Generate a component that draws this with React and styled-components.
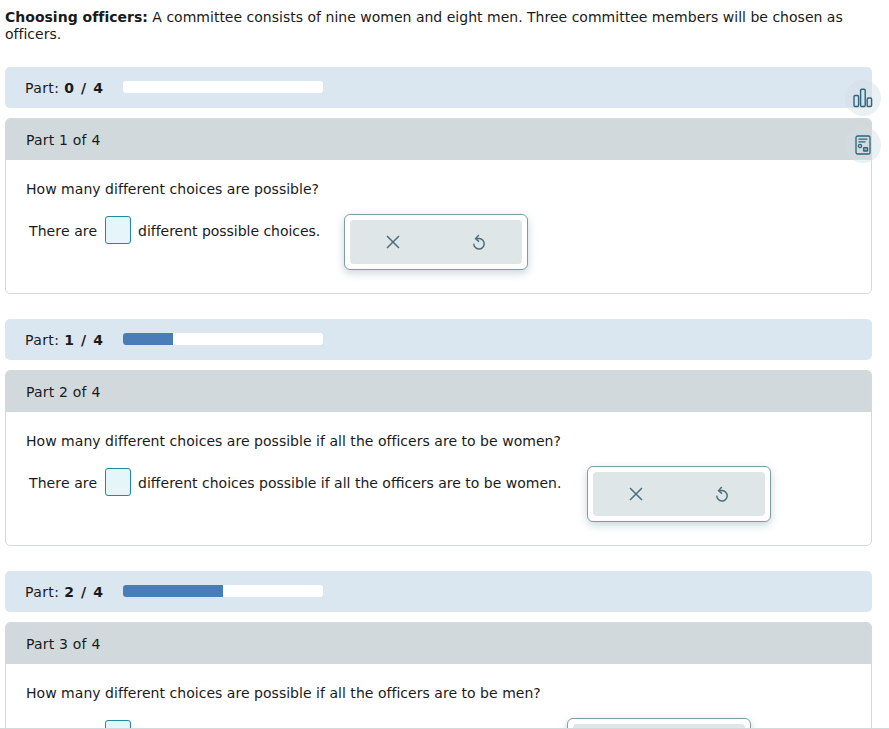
import React from "react";
import styled, { createGlobalStyle } from "styled-components";

const Global = createGlobalStyle`
  html, body { margin: 0; padding: 0; background: #fff; overflow: hidden; }
  body { font-family: "DejaVu Sans", Verdana, sans-serif; font-size: 14px; color: #1a1a1a; }
`;

const Viewport = styled.div`
  position: relative;
  width: 889px;
  height: 729px;
  overflow: hidden;
  box-sizing: border-box;
  border-bottom: 1px solid #d3dadc;
`;

const Page = styled.div`
  width: 867px;
  margin-left: 5px;
`;

const Intro = styled.p`
  margin: 9px 0 24px;
  width: 850px;
  font-size: 14px;
  line-height: 17px;
  letter-spacing: 0.01px;
`;

const Section = styled.section`
  margin-bottom: 25px;
`;

const ProgressBar = styled.div`
  display: flex;
  align-items: center;
  height: 41px;
  padding-left: 20px;
  background: #dae6f0;
  border-radius: 5px;
  margin-bottom: 10px;
`;

const ProgressLabel = styled.div`
  width: 98px;
  white-space: nowrap;
  letter-spacing: 0.4px;
  b { font-weight: 700; letter-spacing: 0.6px; word-spacing: 1px; }
`;

const Track = styled.div`
  width: 200px;
  height: 12px;
  margin-bottom: 1px;
  background: #fff;
  border-radius: 3px;
  overflow: hidden;
`;

const Fill = styled.div`
  height: 100%;
  background: #4a7db8;
`;

const Card = styled.div`
  border: 1px solid #d3dadc;
  border-radius: 5px;
  height: 176px;
  box-sizing: border-box;
  overflow: hidden;
`;

const CardHeader = styled.div`
  display: flex;
  align-items: center;
  height: 41px;
  padding-left: 20px;
  background: #d2d9dc;
  letter-spacing: 0.2px;
`;

const CardBody = styled.div`
  padding: 21px 0 0 20px;
`;

const Question = styled.div`
  line-height: 17px;
  margin-bottom: 16px;
  letter-spacing: 0.03px;
`;

const AnswerRow = styled.div`
  display: flex;
  align-items: flex-start;
  margin-left: 3px;
`;

const AnswerText = styled.span`
  line-height: 17px;
  margin-top: 9px;
  white-space: nowrap;
  letter-spacing: ${(p) => p.$tracking || 0}px;
`;

const AnswerBox = styled.span`
  flex: none;
  width: 26px;
  height: 28px;
  box-sizing: border-box;
  margin: 2px 7px 0 8px;
  background: #e6f5f9;
  border: 1px solid #1f8a9e;
  border-radius: 3px;
`;

const Popup = styled.div`
  flex: none;
  width: 184px;
  height: 56px;
  box-sizing: border-box;
  margin-left: ${(p) => p.$gap}px;
  padding: 5px;
  background: #fff;
  border: 1px solid #7f9ca6;
  border-radius: 6px;
  box-shadow: 0 3px 8px rgba(70, 100, 110, 0.28);
`;

const PopupInner = styled.div`
  display: flex;
  align-items: center;
  height: 44px;
  background: #dfe6e8;
  border-radius: 4px;
`;

const PopupButton = styled.span`
  display: flex;
  justify-content: center;
  align-items: center;
  width: 86px;
  color: #4a6f7d;
`;

const FloatButton = styled.div`
  position: absolute;
  left: 845px;
  top: ${(p) => p.$top}px;
  width: 36px;
  height: 36px;
  border-radius: 50%;
  display: flex;
  align-items: center;
  justify-content: center;
  background: rgba(210, 222, 226, 0.45);
  color: #2f6478;
`;

const XIcon = () => (
  <svg width="14" height="14" viewBox="0 0 14 14" fill="none" stroke="currentColor" strokeWidth="1.5">
    <path d="M1 1 13 13M13 1 1 13" />
  </svg>
);

const UndoIcon = () => (
  <svg width="14" height="16" viewBox="0 0 14 16" fill="none" stroke="currentColor" strokeWidth="1.5">
    <path d="M4.2 4.6h3a5.2 5.2 0 1 1-5.4 5" />
    <path d="M6.8 1 3.6 4.6l3.4 3" />
  </svg>
);

const ChartIcon = () => (
  <svg width="20" height="20" viewBox="0 0 20 20" fill="none" stroke="currentColor" strokeWidth="1.4">
    <rect x="1" y="7.5" width="4.6" height="11" rx="1.2" />
    <rect x="7.6" y="1.2" width="4.6" height="17.3" rx="1.2" />
    <rect x="14.2" y="10" width="4.4" height="8.5" rx="1.2" />
  </svg>
);

const ReportIcon = () => (
  <svg width="16" height="20" viewBox="0 0 16 20" fill="none" stroke="currentColor" strokeWidth="1.3">
    <rect x="1" y="1" width="14" height="18" rx="1.6" />
    <path d="M3.5 4.2h9M3.5 6.8h7" />
    <circle cx="5" cy="11" r="1.6" />
    <rect x="8.6" y="12.6" width="4" height="3.4" rx="0.6" fill="currentColor" fillOpacity="0.4" />
  </svg>
);

const parts = [
  { done: 0, q: "How many different choices are possible?", a: "different possible choices.", tracking: -0.03, gap: 24 },
  { done: 1, q: "How many different choices are possible if all the officers are to be women?", a: "different choices possible if all the officers are to be women.", tracking: 0, gap: 26 },
  { done: 2, q: "How many different choices are possible if all the officers are to be men?", a: "different choices possible if all the officers are to be men.", tracking: 0, gap: 26 },
];

export default function App() {
  return (
    <Viewport>
      <Global />
      <Page>
        <Intro>
          <b>Choosing officers:</b> A committee consists of nine women and eight men. Three committee members will be chosen as officers.
        </Intro>
        {parts.map((part) => (
          <Section key={part.done}>
            <ProgressBar>
              <ProgressLabel>
                Part: <b>{part.done} / 4</b>
              </ProgressLabel>
              <Track>
                <Fill style={{ width: `${part.done * 25}%` }} />
              </Track>
            </ProgressBar>
            <Card>
              <CardHeader>Part {part.done + 1} of 4</CardHeader>
              <CardBody>
                <Question>{part.q}</Question>
                <AnswerRow>
                  <AnswerText $tracking={0.1}>There are</AnswerText>
                  <AnswerBox />
                  <AnswerText $tracking={part.tracking}>{part.a}</AnswerText>
                  <Popup $gap={part.gap}>
                    <PopupInner>
                      <PopupButton><XIcon /></PopupButton>
                      <PopupButton><UndoIcon /></PopupButton>
                    </PopupInner>
                  </Popup>
                </AnswerRow>
              </CardBody>
            </Card>
          </Section>
        ))}
      </Page>
      <FloatButton $top={80}><ChartIcon /></FloatButton>
      <FloatButton $top={127}><ReportIcon /></FloatButton>
    </Viewport>
  );
}
